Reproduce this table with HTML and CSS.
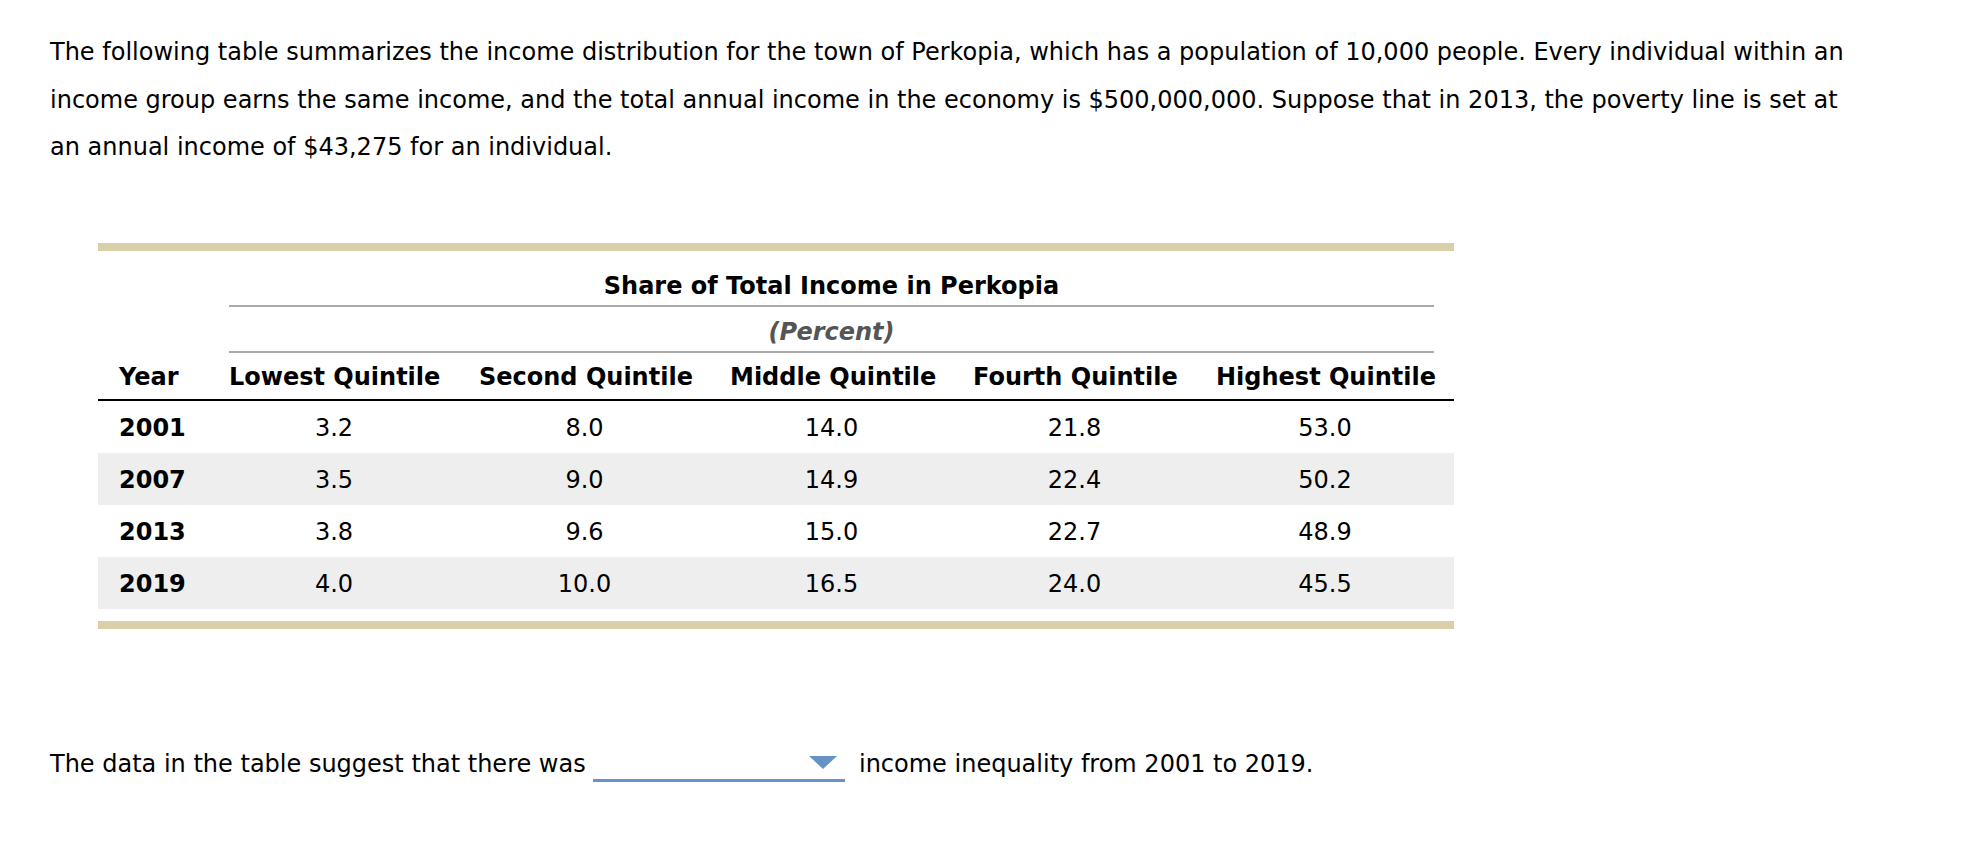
FILE: index.html
```html
<!DOCTYPE html>
<html lang="en">
<head>
<meta charset="utf-8">
<title>Perkopia income distribution</title>
<link rel="stylesheet" href="styles.css">
</head>
<body>
<div class="page">
  <p class="intro">The following table summarizes the income distribution for the town of Perkopia, which has a population of 10,000 people. Every individual within an income group earns the same income, and the total annual income in the economy is $500,000,000. Suppose that in 2013, the poverty line is set at an annual income of $43,275 for an individual.</p>

  <div class="table-wrap">
    <table class="data">
      <colgroup>
        <col class="c-year">
        <col class="c-low">
        <col class="c-second">
        <col class="c-middle">
        <col class="c-fourth">
        <col class="c-high">
      </colgroup>
      <thead>
        <tr class="group-row">
          <th class="blank"></th>
          <th colspan="5" class="span-head"><div class="title">Share of Total Income in Perkopia</div></th>
        </tr>
        <tr class="group-row">
          <th class="blank"></th>
          <th colspan="5" class="span-head"><div class="unit">(Percent)</div></th>
        </tr>
        <tr class="col-heads">
          <th class="year">Year</th>
          <th>Lowest Quintile</th>
          <th>Second Quintile</th>
          <th>Middle Quintile</th>
          <th>Fourth Quintile</th>
          <th>Highest Quintile</th>
        </tr>
      </thead>
      <tbody>
        <tr>
          <th class="year">2001</th><td>3.2</td><td>8.0</td><td>14.0</td><td>21.8</td><td>53.0</td>
        </tr>
        <tr class="shade">
          <th class="year">2007</th><td>3.5</td><td>9.0</td><td>14.9</td><td>22.4</td><td>50.2</td>
        </tr>
        <tr>
          <th class="year">2013</th><td>3.8</td><td>9.6</td><td>15.0</td><td>22.7</td><td>48.9</td>
        </tr>
        <tr class="shade">
          <th class="year">2019</th><td>4.0</td><td>10.0</td><td>16.5</td><td>24.0</td><td>45.5</td>
        </tr>
      </tbody>
    </table>
  </div>

  <p class="question">The data in the table suggest that there was <span class="dropdown"><svg class="arrow" width="28" height="13" viewBox="0 0 28 13"><polygon points="0,0 28,0 14,13" fill="#6792c6"/></svg></span> income inequality from 2001 to 2019.</p>
</div>
</body>
</html>
```

FILE: styles.css
```css
html, body {
  margin: 0;
  padding: 0;
  background: #ffffff;
}

body {
  font-family: "DejaVu Sans", Verdana, sans-serif;
  font-size: 24px;
  color: #000000;
}

.page {
  padding: 29px 0 40px 50px;
}

.intro {
  margin: 0;
  width: 1815px;
  line-height: 47.5px;
}

.table-wrap {
  margin: 71px 0 0 48px;
  width: 1356px;
  border-top: 8px solid #d9cfa9;
  border-bottom: 8px solid #d9cfa9;
  padding-bottom: 12px;
}

.data {
  width: 1356px;
  table-layout: fixed;
  border-collapse: collapse;
  border-spacing: 0;
}

.c-year { width: 111px; }
.c-low { width: 250px; }
.c-second { width: 251px; }
.c-middle { width: 243px; }
.c-fourth { width: 243px; }
.c-high { width: 258px; }

.data th,
.data td {
  padding: 13px 20px 11px;
  line-height: 28px;
  text-align: center;
  white-space: nowrap;
}

.data th {
  font-weight: bold;
}

.data .group-row th {
  padding: 0 20px;
}

.data .group-row th.blank {
  padding: 0;
}

.title {
  padding: 21px 0 5px;
  border-bottom: 2px solid #aaaaaa;
}

.unit {
  padding: 11px 0 5px;
  border-bottom: 2px solid #aaaaaa;
  font-style: italic;
  color: #555555;
}

.col-heads th {
  padding-top: 10px;
  padding-bottom: 8px;
  border-bottom: 2px solid #000000;
}

.data th.year {
  text-align: left;
  padding-left: 21px;
  padding-right: 0;
}

.shade {
  background: #eeeeee;
}

.question {
  margin: 112px 0 0;
  line-height: 47.5px;
}

.dropdown {
  position: relative;
  display: inline-block;
  width: 252px;
  height: 28px;
  border-bottom: 3px solid #6792c6;
  margin-bottom: -10px;
  margin-right: 6px;
  vertical-align: baseline;
}

.arrow {
  position: absolute;
  right: 8px;
  top: 5px;
  display: block;
}
```
